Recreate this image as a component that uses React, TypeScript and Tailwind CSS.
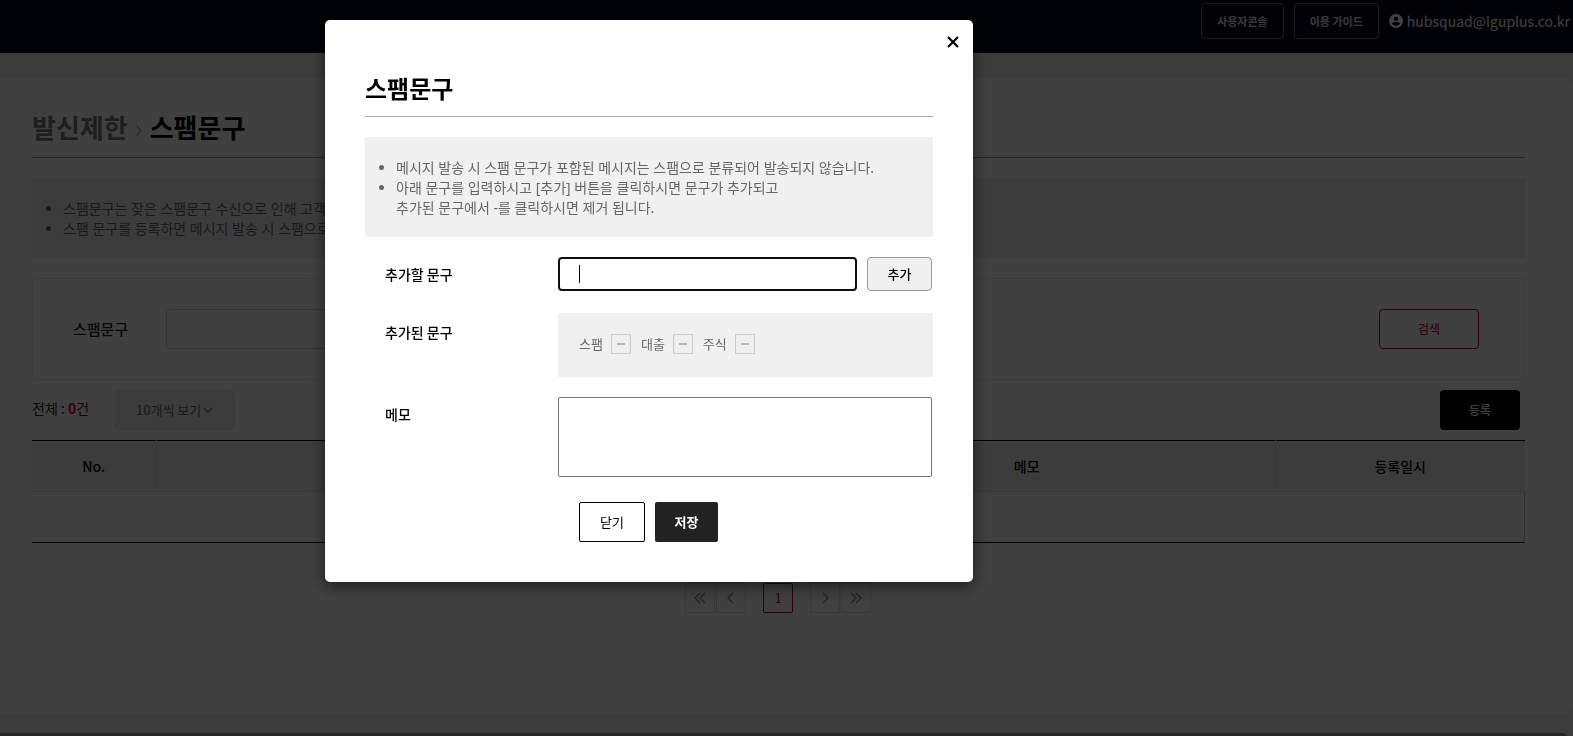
import { useState } from "react";
import type { ReactNode } from "react";

const notices = [
  "스팸문구는 잦은 스팸문구 수신으로 인해 고객",
  "스팸 문구를 등록하면 메시지 발송 시 스팸으로",
];

const words = ["스팸", "대출", "주식"];

function Chevrons({ points }: { points: string[] }) {
  return (
    <svg width="12" height="12" viewBox="0 0 12 12" fill="none" stroke="currentColor" strokeWidth="1.3" aria-hidden="true">
      {points.map((p) => (
        <polyline key={p} points={p} />
      ))}
    </svg>
  );
}

function PageButton({ label, children }: { label: string; children: ReactNode }) {
  return (
    <button aria-label={label} className="flex size-[30px] items-center justify-center border border-[#e0e0e0] text-[#888]">
      {children}
    </button>
  );
}

function Header() {
  return (
    <header className="flex h-[53px] items-start justify-end gap-[10px] bg-[#050a1c] pt-[3px] pr-[3px] text-[#e0e0e0]">
      <button className="h-9 rounded border border-[#777] px-[15px] text-[11px] font-bold">사용자콘솔</button>
      <button className="h-9 rounded border border-[#777] px-[15px] text-[11px] font-bold">이용 가이드</button>
      <a href="#account" className="flex h-9 items-center gap-1 text-sm text-white">
        <svg width="14" height="14" viewBox="0 0 14 14" aria-hidden="true">
          <circle cx="7" cy="7" r="7" fill="currentColor" />
          <circle cx="7" cy="4.8" r="2.2" fill="#050a1c" />
          <path d="M2.8 9.3Q7 6.8 11.2 9.3Q9.8 11.8 7 11.8T2.8 9.3Z" fill="#050a1c" />
        </svg>
        hubsquad@lguplus.co.kr
      </a>
    </header>
  );
}

function SearchPage() {
  return (
    <main className="rounded-r-xl bg-white px-8 pt-[30px] pr-12 pb-[101px]">
      <h1 className="flex h-[50px] items-start gap-2 border-b border-[#999] text-[26px] leading-[38px] font-bold text-black">
        <span className="text-[#777]">발신제한</span>
        <svg width="6" height="40" viewBox="0 0 6 40" fill="none" stroke="#999" strokeWidth="1.2" aria-hidden="true">
          <polyline points="0.5,17.5 5,22.5 0.5,27.5" />
        </svg>
        <span>스팸문구</span>
      </h1>

      <ul className="mt-5 list-disc bg-[#f0f0f0] pt-[21px] pb-[19px] pl-[31px] font-['Noto_Sans','Noto_Sans_CJK_KR',sans-serif] text-sm leading-5 text-[#666]">
        {notices.map((n) => (
          <li key={n}>{n}</li>
        ))}
      </ul>

      <form className="mt-5 flex h-[102px] items-center rounded border border-[#e8e8e8] pr-[45px] pl-10">
        <label htmlFor="keyword" className="w-[93px] text-[15px] font-medium text-[#222]">
          스팸문구
        </label>
        <input id="keyword" className="h-10 w-[400px] rounded border border-[#ccc]" />
        <button type="button" className="ml-auto h-10 w-[100px] rounded border border-[#b0003a] text-xs font-medium text-[#d0104c]">
          검색
        </button>
      </form>

      <div className="flex h-[60px] items-center pr-[5px] text-sm text-[#222]">
        <p className="w-[83px] pb-1">
          전체 : <b className="text-[#e6002c]">0</b>건
        </p>
        <div className="flex h-10 w-[120px] items-center justify-center rounded border border-[#e4e4e4] bg-[#f0f0f0] text-[13px] text-[#666]">
          <select aria-label="페이지당 개수" className="appearance-none">
            <option>10개씩 보기</option>
          </select>
          <Chevrons points={["2,4 6,8 10,4"]} />
        </div>
        <button className="ml-auto h-10 w-20 rounded bg-black text-xs font-medium text-white">등록</button>
      </div>

      <table className="w-full table-fixed border-collapse border-y border-black text-sm text-black">
        <thead>
          <tr className="h-[51px] border-b border-[#e0e0e0] bg-[#f0f0f0]">
            <th className="w-[124px] border-r border-[#e0e0e0] font-medium">No.</th>
            <th className="w-5/12 border-r border-[#e0e0e0] font-medium">스팸문구</th>
            <th className="w-1/3 border-r border-[#e0e0e0] font-medium">메모</th>
            <th className="w-[249px] font-medium">등록일시</th>
          </tr>
        </thead>
        <tbody>
          <tr className="h-[51px]">
            <td colSpan={4} className="border-r border-[#bbb]" />
          </tr>
        </tbody>
      </table>

      <nav aria-label="페이지" className="mt-10 flex justify-center pr-px">
        <div className="flex gap-px">
          <PageButton label="처음">
            <Chevrons points={["6,1 1,6 6,11", "11,1 6,6 11,11"]} />
          </PageButton>
          <PageButton label="이전">
            <Chevrons points={["8,1 3,6 8,11"]} />
          </PageButton>
        </div>
        <button className="mx-[17px] size-[30px] rounded-xs border border-[#b0003a] text-[13px] text-[#d0104c]">1</button>
        <div className="flex gap-px">
          <PageButton label="다음">
            <Chevrons points={["4,1 9,6 4,11"]} />
          </PageButton>
          <PageButton label="마지막">
            <Chevrons points={["1,1 6,6 1,11", "6,1 11,6 6,11"]} />
          </PageButton>
        </div>
      </nav>
    </main>
  );
}

function SpamDialog() {
  const [phrase, setPhrase] = useState("");
  const [memo, setMemo] = useState("");
  return (
    <section
      role="dialog"
      aria-modal="true"
      aria-labelledby="dialog-title"
      className="relative w-full max-w-[648px] rounded-[5px] bg-white px-10 pt-12 pb-10 text-sm text-black shadow-[0_4px_16px_rgba(0,0,0,0.6)]"
    >
      <button aria-label="창 닫기" className="absolute top-3 right-[10px] flex size-5 items-center justify-center">
        <svg width="12" height="12" viewBox="0 0 12 12" stroke="currentColor" strokeWidth="2.2" aria-hidden="true">
          <path d="M1 1L11 11M11 1L1 11" />
        </svg>
      </button>

      <h2 id="dialog-title" className="h-[49px] border-b border-[#aaa] text-2xl leading-10 font-bold">
        스팸문구
      </h2>

      <ul className="mt-5 list-disc bg-[#f0f0f0] pt-[21px] pb-[19px] pl-[31px] font-['Noto_Sans','Noto_Sans_CJK_KR',sans-serif] leading-5 text-[#666]">
        <li>메시지 발송 시 스팸 문구가 포함된 메시지는 스팸으로 분류되어 발송되지 않습니다.</li>
        <li>
          아래 문구를 입력하시고 [추가] 버튼을 클릭하시면 문구가 추가되고
          <br />
          추가된 문구에서 -를 클릭하시면 제거 됩니다.
        </li>
      </ul>

      <div className="mt-5 grid grid-cols-[173px_1fr] gap-y-5 pl-5 font-medium">
        <label htmlFor="phrase" className="leading-[34px]">
          추가할 문구
        </label>
        <div className="flex gap-[10px] pr-px pb-[2px]">
          <div className="relative flex-1">
            <input
              id="phrase"
              value={phrase}
              onChange={(e) => setPhrase(e.target.value)}
              className="h-[34px] w-full rounded border-2 border-[#101010] px-5 caret-transparent outline-none"
            />
            <span className="absolute top-2 left-[21px] h-[18px] w-px bg-black" />
          </div>
          <button className="h-[34px] w-[65px] rounded border border-[#999] bg-[#f0f0f0] text-[13px] font-medium">추가</button>
        </div>

        <h3 className="leading-[38px]">추가된 문구</h3>
        <ul className="flex h-16 items-center gap-[10px] bg-[#f0f0f0] px-[21px] pb-0.5 text-[13px] font-normal text-[#666]">
          {words.map((w) => (
            <li key={w} className="flex items-center gap-2">
              {w}
              <button aria-label={`${w} 제거`} className="flex size-5 items-center justify-center border border-[#ccc]">
                <svg width="8" height="2" viewBox="0 0 8 2" fill="#b8b8b8" aria-hidden="true">
                  <rect width="8" height="2" />
                </svg>
              </button>
            </li>
          ))}
        </ul>

        <label htmlFor="memo" className="leading-[34px]">
          메모
        </label>
        <div className="flex pr-px">
          <textarea
            id="memo"
            value={memo}
            onChange={(e) => setMemo(e.target.value)}
            className="h-20 w-full resize-none rounded-xs border border-[#767676] p-2"
          />
        </div>
      </div>

      <div className="mt-[25px] flex gap-[10px] pl-[214px] text-[13px]">
        <button className="h-10 w-[66px] rounded-xs border border-black">닫기</button>
        <button className="h-10 w-[63px] rounded-xs bg-[#222] font-bold text-white">저장</button>
      </div>
    </section>
  );
}

export default function App() {
  return (
    <div className="h-screen overflow-hidden bg-[#f0f0f0] font-['Noto_Sans_CJK_KR',sans-serif]">
      <Header />
      <div className="pt-[25px]">
        <SearchPage />
      </div>
      <footer className="mt-[19px] mr-[5px] h-10 rounded-tr-md bg-[#989898]" />
      <div className="fixed inset-0 flex items-start justify-center bg-black/75 pt-5 pr-[275px]">
        <SpamDialog />
      </div>
    </div>
  );
}
